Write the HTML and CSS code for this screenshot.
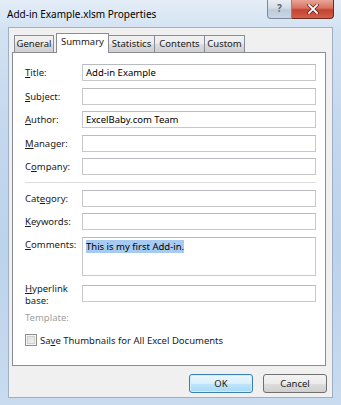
FILE: index.html
```html
<!DOCTYPE html>
<html>
<head>
<meta charset="utf-8">
<link rel="stylesheet" href="styles.css">
</head>
<body>
<div class="window">
  <div class="titlebar">
    <div class="title">Add-in Example.xlsm Properties</div>
    <div class="controls">
      <div class="btn-help">?</div>
      <div class="btn-close">
        <svg width="12" height="10" viewBox="0 0 12 10"><path d="M2 1 L10 9 M10 1 L2 9" stroke="#5a1a12" stroke-width="3.2" stroke-linecap="square"/><path d="M2 1 L10 9 M10 1 L2 9" stroke="#ffffff" stroke-width="1.8" stroke-linecap="square"/></svg>
      </div>
    </div>
  </div>
  <div class="client">
    <div class="tabs">
      <div class="tab t-general">General</div>
      <div class="tab t-summary active">Summary</div>
      <div class="tab t-stats">Statistics</div>
      <div class="tab t-contents">Contents</div>
      <div class="tab t-custom">Custom</div>
    </div>
    <div class="panel">
      <div class="row"><div class="label"><u>T</u>itle:</div><div class="input">Add-in Example</div></div>
      <div class="row"><div class="label"><u>S</u>ubject:</div><div class="input"></div></div>
      <div class="row"><div class="label"><u>A</u>uthor:</div><div class="input">ExcelBaby.com Team</div></div>
      <div class="row"><div class="label"><u>M</u>anager:</div><div class="input"></div></div>
      <div class="row"><div class="label">C<u>o</u>mpany:</div><div class="input"></div></div>
      <div class="sep"></div>
      <div class="row"><div class="label">Cat<u>e</u>gory:</div><div class="input"></div></div>
      <div class="row"><div class="label"><u>K</u>eywords:</div><div class="input"></div></div>
      <div class="row row-tall"><div class="label"><u>C</u>omments:</div><div class="input input-tall"><span class="sel">This is my first Add-in.</span></div></div>
      <div class="row row-link"><div class="label label-two"><div class="ln"><u>H</u>yperlink</div><div class="ln">base:</div></div><div class="input"></div></div>
      <div class="template">Template:</div>
      <div class="check-row"><div class="checkbox"></div><div class="check-label">Sa<u>v</u>e Thumbnails for All Excel Documents</div></div>
    </div>
    <div class="buttons">
      <div class="button default">OK</div>
      <div class="button">Cancel</div>
    </div>
  </div>
</div>
</body>
</html>
```
FILE: styles.css
```css
* { box-sizing: border-box; }
html, body { margin: 0; padding: 0; }
body {
  width: 341px;
  height: 405px;
  overflow: hidden;
  font-family: "Noto Sans", "Open Sans", sans-serif;
  font-size: 9.5px;
  color: #1a1a1a;
}
.window {
  width: 341px;
  height: 405px;
  background: linear-gradient(180deg, #e4edf7 0px, #d3e2f2 30px, #c4d8ee 120px, #bcd3ec 250px, #c8dbef 405px);
  padding: 0 8px 7px 8px;
  display: flex;
  flex-direction: column;
}
.titlebar {
  height: 27px;
  display: flex;
  justify-content: space-between;
  flex-shrink: 0;
}
.title {
  padding-top: 7px;
  margin-left: -1px;
  font-size: 10px;
  color: #000;
}
.controls {
  display: flex;
  height: 19px;
  margin-right: -1px;
}
.btn-help {
  width: 25px;
  height: 19px;
  border: 1px solid #7b8a9c;
  border-top: none;
  border-radius: 0 0 0 4px;
  background: linear-gradient(180deg, #e9eef4 0%, #d3dce7 45%, #bccbdb 55%, #c9d6e4 100%);
  color: #5a6878;
  font-weight: bold;
  font-size: 10px;
  text-align: center;
  line-height: 17px;
}
.btn-close {
  width: 42px;
  height: 19px;
  border: 1px solid #6d2a22;
  border-left: none;
  border-top: none;
  border-radius: 0 0 4px 0;
  background: linear-gradient(180deg, #e8a597 0%, #d7715f 45%, #c4432f 55%, #d0604a 100%);
  display: flex;
  align-items: center;
  justify-content: center;
}
.client {
  flex: 1;
  background: #f0f0f0;
  border: 1px solid #9fb0c4;
  padding: 3px 6px 0 3px;
  display: flex;
  flex-direction: column;
}
.tabs {
  display: flex;
  align-items: flex-end;
  height: 21px;
  padding-left: 2px;
  position: relative;
  z-index: 1;
}
.tab {
  height: 17px;
  border: 1px solid #898c95;
  border-bottom: none;
  background: linear-gradient(180deg, #f2f2f2 0%, #ebebeb 50%, #dddddd 51%, #cfcfcf 100%);
  text-align: center;
  line-height: 16px;
  margin-right: -1px;
  color: #1a1a1a;
}
.t-general { width: 40px; margin-right: 2px; }
.t-summary { width: 53px; }
.t-stats { width: 47px; }
.t-contents { width: 51px; }
.t-custom { width: 41px; }
.tab.active {
  height: 20px;
  background: #ffffff;
  margin-bottom: -1px;
  line-height: 16px;
  margin-right: -1px;
}
.panel {
  height: 314px;
  background: #fff;
  border: 1px solid #898c95;
  padding: 11px 9px 0 12px;
  flex-shrink: 0;
}
.row {
  display: flex;
  align-items: center;
  height: 17px;
  margin-bottom: 6.5px;
}
.label {
  width: 57px;
  flex-shrink: 0;
  color: #1a1a1a;
}
.input {
  flex: 1;
  height: 17px;
  border: 1px solid #c6c8cc;
  border-top-color: #b9bbc0;
  padding: 0 3px;
  line-height: 15px;
  color: #000;
}
.sep {
  height: 1px;
  background: #dcdcdc;
  margin: 3.5px 0 7px 0;
}
.row-tall {
  height: 39px;
  align-items: flex-start;
  margin-bottom: 9px;
}
.row-tall .label { padding-top: 1px; }
.input-tall {
  height: 39px;
  padding-top: 1px;
}
.sel { background: #a6caf0; }
.row-link {
  align-items: flex-start;
  margin-bottom: 0;
}
.label-two {
  margin-top: -2px;
}
.ln {
  height: 12px;
  line-height: 12px;
}
.template {
  color: #a0a0a0;
  margin-top: 10px;
  height: 12px;
  line-height: 12px;
}
.check-row {
  display: flex;
  align-items: center;
  margin-top: 10px;
}
.checkbox {
  width: 12px;
  height: 12px;
  border: 1px solid #8f8f8f;
  background: linear-gradient(135deg, #dcdcdc 0%, #f4f4f4 100%);
  box-shadow: inset 0 0 0 1px #f4f4f4, inset 0 0 0 2px #cfcfcf;
  margin-right: 3px;
}
.buttons {
  display: flex;
  justify-content: flex-end;
  gap: 10px;
  padding-top: 8px;
  margin-right: -1px;
}
.button {
  width: 64px;
  height: 19px;
  border: 1px solid #707070;
  border-radius: 3px;
  background: linear-gradient(180deg, #f3f3f3 0%, #ebebeb 50%, #dddddd 51%, #cfcfcf 100%);
  text-align: center;
  line-height: 17px;
  color: #1a1a1a;
}
.button.default {
  border-color: #3c7fb1;
  background: linear-gradient(180deg, #eaf6fd 0%, #d9f0fc 50%, #bee6fd 51%, #a7d9f5 100%);
  box-shadow: inset 0 0 0 1px #cfeefc;
}
```
